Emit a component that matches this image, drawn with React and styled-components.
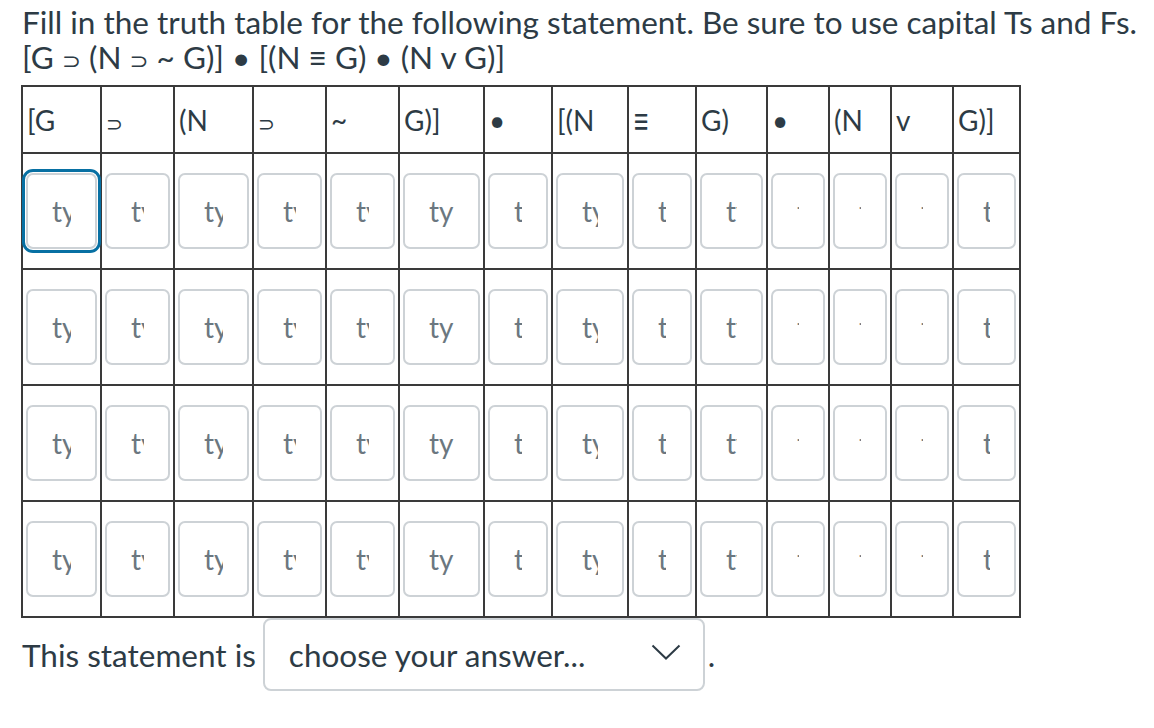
import React from "react";
import styled, { createGlobalStyle } from "styled-components";

const GlobalStyle = createGlobalStyle`
  html, body {
    margin: 0;
    padding: 0;
    background: #ffffff;
  }
  body {
    font-family: Lato, "Noto Sans", "DejaVu Sans", sans-serif;
    color: #2d3b45;
  }
`;

const Page = styled.div`
  padding: 5px 0 0 20px;
`;

const Prompt = styled.p`
  margin: 0 0 10px 2px;
  font-size: 31.5px;
  line-height: 35px;
  white-space: nowrap;
`;

// logic operators: the fallback glyphs are off-size, so tune them per symbol
const Sym = styled.span`
  display: inline-block;
  line-height: 1;
  font-size: ${(p) => p.$size || 1}em;
  transform: ${(p) => p.$transform || "none"};
`;

const TruthTable = styled.table`
  border-collapse: collapse;
  margin-left: 1px;
`;

const HeadCell = styled.th`
  border: 2px solid #3a3a3a;
  padding: 12px 4px 11px 4px;
  height: 42px;
  font-size: 28px;
  line-height: 42px;
  font-weight: 400;
  text-align: left;
  vertical-align: middle;
  color: #2d3b45;
  white-space: nowrap;
`;

const BodyCell = styled.td`
  border: 2px solid #3a3a3a;
  padding: 19px 3px 19px 3px;
  vertical-align: middle;
`;

const Blank = styled.input`
  display: block;
  box-sizing: border-box;
  width: ${(p) => p.$w}px;
  height: 76px;
  margin: 0;
  padding: 0 24px;
  border: 2px solid #cdd2d6;
  border-radius: 7px;
  background: #ffffff;
  font-family: Lato, "Noto Sans", sans-serif;
  font-size: 28px;
  color: #2d3b45;
  outline: ${(p) => (p.$focused ? "3px solid #0770a3" : "none")};
  outline-offset: 1px;

  &::placeholder {
    color: #6b7780;
    opacity: 1;
  }
`;

const Statement = styled.div`
  display: flex;
  align-items: baseline;
  margin-top: 0;
  padding-left: 2px;
  font-size: 31.5px;
  line-height: 38px;
`;

const SelectBox = styled.div`
  display: inline-flex;
  align-items: center;
  justify-content: space-between;
  box-sizing: border-box;
  width: 442px;
  height: 73px;
  margin-left: 7px;
  padding: 0 22px 0 24px;
  border: 2px solid #cdd2d6;
  border-radius: 8px;
  background: #ffffff;
  color: #2d3b45;
`;

const Chevron = styled.svg`
  width: 30px;
  height: 16px;
  flex: none;
  align-self: center;
  margin-top: -6px;
`;

const Period = styled.span`
  margin-left: 3px;
`;

const SUP = <Sym $size={0.72}>⊃</Sym>;
const EQUIV = <Sym $transform="scale(1, 1.4)">≡</Sym>;

const columns = [
  { head: "[G", w: 71 },
  { head: SUP, w: 65 },
  { head: "(N", w: 71 },
  { head: SUP, w: 65 },
  { head: "~", w: 65 },
  { head: "G)]", w: 77 },
  { head: "•", w: 60 },
  { head: "[(N", w: 68 },
  { head: EQUIV, w: 60 },
  { head: "G)", w: 63 },
  { head: "•", w: 54 },
  { head: "(N", w: 54 },
  { head: "v", w: 54 },
  { head: "G)]", w: 59 },
];

const rows = [0, 1, 2, 3];

export default function App() {
  return (
    <>
      <GlobalStyle />
      <Page>
        <Prompt>
          Fill in the truth table for the following statement. Be sure to use
          capital Ts and Fs.
          <br />
          [G {SUP} (N {SUP} ~ G)] • [(N ≡ G) • (N v G)]
        </Prompt>

        <TruthTable>
          <thead>
            <tr>
              {columns.map((c, i) => (
                <HeadCell key={i}>{c.head}</HeadCell>
              ))}
            </tr>
          </thead>
          <tbody>
            {rows.map((r) => (
              <tr key={r}>
                {columns.map((c, i) => (
                  <BodyCell key={i}>
                    <Blank
                      type="text"
                      placeholder="type your answer"
                      $w={c.w}
                      $focused={r === 0 && i === 0}
                    />
                  </BodyCell>
                ))}
              </tr>
            ))}
          </tbody>
        </TruthTable>

        <Statement>
          <span>This statement is</span>
          <SelectBox role="combobox">
            <span>choose your answer...</span>
            <Chevron viewBox="0 0 30 16">
              <polyline
                points="1.5,1.5 15,14.5 28.5,1.5"
                fill="none"
                stroke="#2d3b45"
                strokeWidth="2"
              />
            </Chevron>
          </SelectBox>
          <Period>.</Period>
        </Statement>
      </Page>
    </>
  );
}
